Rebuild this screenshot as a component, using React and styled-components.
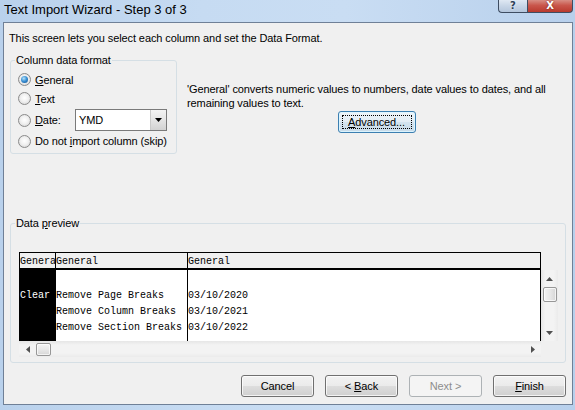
import React from 'react';
import styled, { createGlobalStyle, css } from 'styled-components';

const GlobalStyle = createGlobalStyle`
  html, body { margin: 0; padding: 0; }
  body { background: #bad2ed; font-family: "Liberation Sans", Arial, sans-serif; }
  * { box-sizing: border-box; }
`;

const Window = styled.div`
  width: 575px;
  height: 410px;
  display: flex;
  flex-direction: column;
  padding: 0 2px 5px 3px;
  background: linear-gradient(90deg, #b9d1ec 0%, #c6dbf2 35%, #c9ddf3 60%, #b8d0ec 100%);
  overflow: hidden;
`;

const TitleBar = styled.div`
  height: 22px;
  flex: none;
  display: flex;
  align-items: flex-start;
`;

const Title = styled.div`
  margin: 2px 0 0 1px;
  font-size: 13px;
  line-height: 15px;
  color: #000;
`;

const CaptionButtons = styled.div`
  margin-left: auto;
  display: flex;
`;

const CaptionButton = styled.div`
  height: 13px;
  width: ${p => (p.$close ? 46 : 29)}px;
  border: 1px solid #3e4d62;
  border-top: none;
  display: flex;
  align-items: center;
  justify-content: center;
  font-family: "DejaVu Sans", sans-serif;
  font-weight: bold;
  font-size: 10px;
  line-height: 12px;
  ${p =>
    p.$close
      ? css`
          border-radius: 0 0 4px 0;
          background: linear-gradient(180deg, #d88e84 0%, #c9564b 45%, #b93a2e 100%);
          color: #fff;
          text-shadow: 0 0 2px #6b1810;
        `
      : css`
          border-right: none;
          border-radius: 0 0 0 4px;
          background: linear-gradient(180deg, #dfe8f3 0%, #c7d5e6 50%, #b4c6dc 100%);
          color: #2d3f58;
          text-shadow: 0 0 2px #ffffff;
        `}
`;

const Client = styled.div`
  flex: 1;
  display: flex;
  flex-direction: column;
  background: #f0f0f0;
  border: 1px solid #6f8097;
  padding: 8px 6px 0 6px;
  font-size: 11px;
  letter-spacing: -0.1px;
  color: #000;
`;

const Intro = styled.div`
  margin-left: -1px;
  line-height: 15px;
  white-space: nowrap;
`;

const TopRow = styled.div`
  display: flex;
  align-items: flex-start;
  margin-top: 7px;
`;

const Group = styled.fieldset`
  margin: 0;
  min-width: 0;
  border: 1px solid #d5dfe5;
  border-radius: 3px;
  padding: 0;
  width: ${p => p.$width || 'auto'};
`;

const Legend = styled.legend`
  margin-left: 4px;
  padding: 0 1px;
  line-height: 14px;
  font-size: 11px;
`;

const RadioList = styled.div`
  display: flex;
  flex-direction: column;
  padding: 3px 0 2px 7px;
`;

const RadioRow = styled.div`
  display: flex;
  align-items: center;
  height: ${p => p.$h}px;
  margin-top: ${p => p.$mt || 0}px;
  white-space: nowrap;
`;

const Radio = styled.span`
  position: relative;
  flex: none;
  width: 13px;
  height: 13px;
  margin-right: 4px;
  border-radius: 50%;
  border: 1px solid #8b8b8b;
  background: radial-gradient(circle at 50% 45%, #ffffff 0%, #f1f1f1 45%, #cfcfcf 100%);
  ${p =>
    p.$checked &&
    css`
      &::after {
        content: '';
        position: absolute;
        left: 2px;
        top: 2px;
        width: 7px;
        height: 7px;
        border-radius: 50%;
        background: radial-gradient(circle at 40% 35%, #b9e4fa 0%, #3d93d6 45%, #0c4c8c 100%);
      }
    `}
`;

const Key = styled.span`
  text-decoration: underline;
`;

const DateLabel = styled.span`
  width: 40px;
  flex: none;
`;

const Select = styled.div`
  width: 92px;
  height: 22px;
  display: flex;
  align-items: center;
  border: 1px solid #7a7a7a;
  background: #fff;
  padding-left: 3px;
`;

const SelectValue = styled.span`
  flex: 1;
`;

const SelectButton = styled.span`
  width: 16px;
  align-self: stretch;
  display: flex;
  align-items: center;
  justify-content: center;
  border-left: 1px solid #c9c9c9;
  background: linear-gradient(180deg, #f3f3f3 0%, #e4e4e4 50%, #d2d2d2 100%);
`;

const Description = styled.div`
  flex: 1;
  margin-left: 10px;
  padding-top: 29px;
  display: flex;
  flex-direction: column;
`;

const DescText = styled.div`
  line-height: 14px;
  white-space: nowrap;
`;

const Button = styled.button`
  position: relative;
  width: 73px;
  height: 22px;
  padding: 0;
  font-family: inherit;
  font-size: 11px;
  letter-spacing: -0.1px;
  color: #000;
  border: 1px solid #707070;
  border-radius: 3px;
  background: linear-gradient(180deg, #f2f2f2 0%, #ebebeb 48%, #dddddd 52%, #cfcfcf 100%);
  box-shadow: inset 0 0 0 1px rgba(255, 255, 255, 0.75);
  ${p =>
    p.disabled &&
    css`
      color: #8d8d8d;
      border-color: #adb2b5;
      background: #f4f4f4;
      box-shadow: none;
    `}
  ${p =>
    p.$focused &&
    css`
      width: 78px;
      align-self: center;
      margin-top: 1px;
      border-color: #3c7fb1;
      background: linear-gradient(180deg, #eef5fa 0%, #e2ecf4 48%, #d3e3ef 52%, #c8dae8 100%);
      box-shadow: inset 0 0 0 1px rgba(220, 245, 255, 0.9);
      &::after {
        content: '';
        position: absolute;
        inset: 3px;
        border: 1px dotted #000;
      }
    `}
`;

const PreviewGroupWrap = styled.div`
  margin-top: 62px;
`;

const PreviewBody = styled.div`
  padding: 22px 7px 5px 8px;
`;

const Preview = styled.div`
  display: grid;
  grid-template-columns: 522px 17px;
  grid-template-rows: 18px 71px 16px;
  font-family: "Liberation Mono", "Courier New", monospace;
  font-size: 10px;
  letter-spacing: 0;
`;

const HeaderRow = styled.div`
  display: grid;
  grid-template-columns: 35px 132px 1fr;
  border: 1px solid #000;
  border-bottom-width: 2px;
  background: #f0f0f0;
`;

const HeaderCell = styled.div`
  overflow: hidden;
  white-space: nowrap;
  padding-top: 2px;
  line-height: 13px;
  border-left: ${p => (p.$first ? 'none' : '1px solid #000')};
`;

const Blank = styled.div``;

const DataArea = styled.div`
  display: grid;
  grid-template-columns: 36px 132px 1fr;
  border-right: 1px solid #000;
  background: #fff;
`;

const DataColumn = styled.div`
  padding-top: 2px;
  overflow: hidden;
  white-space: pre;
  ${p =>
    p.$selected
      ? css`
          background: #000;
          color: #fff;
          padding-left: 1px;
        `
      : css`
          border-left: 1px solid #000;
        `}
`;

const DataLine = styled.div`
  height: 16px;
  line-height: 16px;
`;

const ScrollBar = styled.div`
  display: flex;
  flex-direction: ${p => (p.$vertical ? 'column' : 'row')};
  background: ${p =>
    p.$vertical
      ? 'linear-gradient(90deg, #e6e6e6 0%, #f3f3f3 25%, #f3f3f3 75%, #ebebeb 100%)'
      : 'linear-gradient(180deg, #e6e6e6 0%, #f3f3f3 25%, #f3f3f3 75%, #ebebeb 100%)'};
`;

const ScrollArrow = styled.div`
  width: 17px;
  height: ${p => (p.$vertical ? 17 : 16)}px;
  flex: none;
  display: flex;
  align-items: center;
  justify-content: center;
`;

const ScrollThumb = styled.div`
  flex: none;
  ${p =>
    p.$vertical
      ? css`
          width: 14px;
          height: 15px;
          margin-left: 2px;
          background: linear-gradient(90deg, #f4f4f4 0%, #e8e8e8 50%, #d6d6d6 100%);
        `
      : css`
          width: 15px;
          height: 13px;
          margin-top: 2px;
          background: linear-gradient(180deg, #f4f4f4 0%, #e8e8e8 50%, #d6d6d6 100%);
        `}
  border: 1px solid #979797;
  border-radius: 2px;
  box-shadow: inset 0 0 0 1px rgba(255, 255, 255, 0.7);
`;

const ScrollTrack = styled.div`
  flex: 1;
`;

const Corner = styled.div`
  background: #f0f0f0;
`;

const ButtonRow = styled.div`
  display: flex;
  justify-content: flex-end;
  gap: 11px;
  margin-top: 12px;
`;

const Tri = ({ dir, size = 7, color = '#505050' }) => {
  const h = Math.ceil(size / 2);
  const pts = {
    up: `0,${h} ${size / 2},0 ${size},${h}`,
    down: `0,0 ${size / 2},${h} ${size},0`,
    left: `${h},0 0,${size / 2} ${h},${size}`,
    right: `0,0 ${h},${size / 2} 0,${size}`,
  }[dir];
  const vertical = dir === 'up' || dir === 'down';
  return (
    <svg width={vertical ? size : h} height={vertical ? h : size} viewBox={`0 0 ${vertical ? size : h} ${vertical ? h : size}`}>
      <polygon points={pts} fill={color} />
    </svg>
  );
};

const columns = [
  { header: 'Genera', lines: ['', 'Clear', '', ''], selected: true },
  { header: 'General', lines: ['', 'Remove Page Breaks', 'Remove Column Breaks', 'Remove Section Breaks'] },
  { header: 'General', lines: ['', '03/10/2020', '03/10/2021', '03/10/2022'] },
];

export default function App() {
  return (
    <>
      <GlobalStyle />
      <Window>
        <TitleBar>
          <Title>Text Import Wizard - Step 3 of 3</Title>
          <CaptionButtons>
            <CaptionButton>?</CaptionButton>
            <CaptionButton $close>X</CaptionButton>
          </CaptionButtons>
        </TitleBar>
        <Client>
          <Intro>This screen lets you select each column and set the Data Format.</Intro>
          <TopRow>
            <Group $width="167px">
              <Legend>Column data format</Legend>
              <RadioList>
                <RadioRow $h={19}>
                  <Radio $checked />
                  <span><Key>G</Key>eneral</span>
                </RadioRow>
                <RadioRow $h={19}>
                  <Radio />
                  <span><Key>T</Key>ext</span>
                </RadioRow>
                <RadioRow $h={22} $mt={1}>
                  <Radio />
                  <DateLabel><Key>D</Key>ate:</DateLabel>
                  <Select>
                    <SelectValue>YMD</SelectValue>
                    <SelectButton><Tri dir="down" size={7} color="#000" /></SelectButton>
                  </Select>
                </RadioRow>
                <RadioRow $h={20}>
                  <Radio />
                  <span>Do not <Key>i</Key>mport column (skip)</span>
                </RadioRow>
              </RadioList>
            </Group>
            <Description>
              <DescText>
                'General' converts numeric values to numbers, date values to dates, and all
                <br />
                remaining values to text.
              </DescText>
              <Button $focused><Key>A</Key>dvanced...</Button>
            </Description>
          </TopRow>
          <PreviewGroupWrap>
            <Group>
              <Legend>Data <Key>p</Key>review</Legend>
              <PreviewBody>
                <Preview>
                  <HeaderRow>
                    {columns.map((c, i) => (
                      <HeaderCell key={i} $first={i === 0}>{c.header}</HeaderCell>
                    ))}
                  </HeaderRow>
                  <Blank />
                  <DataArea>
                    {columns.map((c, i) => (
                      <DataColumn key={i} $selected={c.selected}>
                        {c.lines.map((l, j) => (
                          <DataLine key={j}>{l}</DataLine>
                        ))}
                      </DataColumn>
                    ))}
                  </DataArea>
                  <ScrollBar $vertical>
                    <ScrollArrow $vertical><Tri dir="up" /></ScrollArrow>
                    <ScrollThumb $vertical />
                    <ScrollTrack />
                    <ScrollArrow $vertical><Tri dir="down" /></ScrollArrow>
                  </ScrollBar>
                  <ScrollBar>
                    <ScrollArrow><Tri dir="left" /></ScrollArrow>
                    <ScrollThumb />
                    <ScrollTrack />
                    <ScrollArrow><Tri dir="right" /></ScrollArrow>
                  </ScrollBar>
                  <Corner />
                </Preview>
              </PreviewBody>
            </Group>
          </PreviewGroupWrap>
          <ButtonRow>
            <Button>Cancel</Button>
            <Button>&lt; <Key>B</Key>ack</Button>
            <Button disabled>Next &gt;</Button>
            <Button><Key>F</Key>inish</Button>
          </ButtonRow>
        </Client>
      </Window>
    </>
  );
}
